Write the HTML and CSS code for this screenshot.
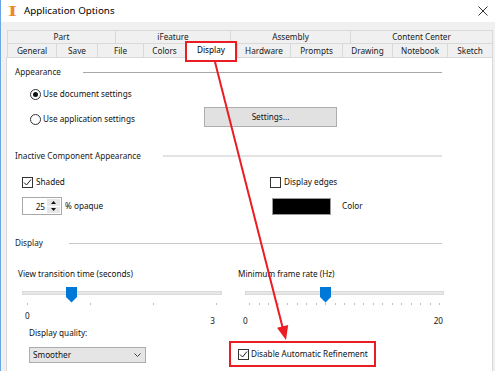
FILE: index.html
```html
<!DOCTYPE html>
<html>
<head>
<meta charset="utf-8">
<title>Application Options</title>
<link rel="stylesheet" href="styles.css">
</head>
<body>
<div class="window">
  <header class="titlebar">
    <span class="app-icon">I</span>
    <span class="title">Application Options</span>
    <svg class="close" width="10" height="10" viewBox="0 0 10 10"><path d="M0.5 0.5L9.5 9.5M9.5 0.5L0.5 9.5" stroke="#333" stroke-width="1" fill="none"/></svg>
  </header>
  <div class="dialog">
    <div class="tabs">
      <div class="tab-row row-top">
        <div class="tab">Part</div>
        <div class="tab">iFeature</div>
        <div class="tab">Assembly</div>
        <div class="tab last">Content Center</div>
      </div>
      <div class="tab-row row-bottom">
        <div class="tab">General</div>
        <div class="tab">Save</div>
        <div class="tab">File</div>
        <div class="tab">Colors</div>
        <div class="tab active">Display</div>
        <div class="tab">Hardware</div>
        <div class="tab">Prompts</div>
        <div class="tab">Drawing</div>
        <div class="tab">Notebook</div>
        <div class="tab last">Sketch</div>
      </div>
    </div>
    <div class="panel">
      <div class="section-head"><span>Appearance</span><i class="rule rule-appearance"></i></div>
      <div class="radio-row first"><span class="radio checked"></span><span>Use document settings</span></div>
      <div class="app-row">
        <div class="radio-row second"><span class="radio"></span><span>Use application settings</span></div>
        <button class="btn">Settings...</button>
      </div>

      <div class="section-head inactive-head"><span>Inactive Component Appearance</span><i class="rule rule-inactive"></i></div>
      <div class="inactive-grid">
        <label class="check"><span class="box"><svg width="9" height="9" viewBox="0 0 9 9"><path d="M1 4.5L3.5 7L8 1.5" stroke="#222" stroke-width="1" fill="none"/></svg></span><span>Shaded</span></label>
        <label class="check"><span class="box"></span><span>Display edges</span></label>
        <div class="spin-row">
          <div class="spin">
            <span class="spin-val">25</span>
            <span class="spin-btns">
              <span class="spin-btn"><svg width="5" height="3" viewBox="0 0 5 3"><path d="M0 3L2.5 0L5 3Z" fill="#111"/></svg></span>
              <span class="spin-btn"><svg width="5" height="3" viewBox="0 0 5 3"><path d="M0 0L2.5 3L5 0Z" fill="#111"/></svg></span>
            </span>
          </div>
          <span>% opaque</span>
        </div>
        <div class="color-row"><span class="swatch"></span><span>Color</span></div>
      </div>

      <div class="section-head display-head"><span>Display</span><i class="rule rule-display"></i></div>
      <div class="display-grid">
        <div class="slider-label">View transition time (seconds)</div>
        <div class="slider-label">Minimum frame rate (Hz)</div>

        <div class="slider slider-left">
          <div class="track"></div>
          <svg class="thumb" style="left:44px" width="11" height="16" viewBox="0 0 11 16"><path d="M0 0H11V10L5.5 15.5L0 10Z" fill="#0078d7"/></svg>
          <div class="ticks"><i></i><i></i><i></i><i></i></div>
        </div>
        <div class="slider slider-right">
          <div class="track"></div>
          <svg class="thumb" style="left:75px" width="11" height="16" viewBox="0 0 11 16"><path d="M0 0H11V10L5.5 15.5L0 10Z" fill="#0078d7"/></svg>
          <div class="ticks"><i></i><i></i><i></i><i></i><i></i><i></i><i></i><i></i><i></i><i></i><i></i><i></i><i></i><i></i><i></i><i></i><i></i><i></i><i></i><i></i><i></i></div>
        </div>

        <div class="nums nums-left"><span class="low">0</span><span>3</span></div>
        <div class="nums nums-right"><span>0</span><span>20</span></div>

        <div class="quality">
          <div class="quality-label">Display quality:</div>
          <div class="select"><span>Smoother</span><svg width="7" height="4" viewBox="0 0 7 4"><path d="M0.5 0.5L3.5 3.5L6.5 0.5" stroke="#444" stroke-width="1" fill="none"/></svg></div>
        </div>
        <div class="refine">
          <label class="check highlight"><span class="box"><svg width="9" height="9" viewBox="0 0 9 9"><path d="M1 4.5L3.5 7L8 1.5" stroke="#222" stroke-width="1" fill="none"/></svg></span><span>Disable Automatic Refinement</span></label>
        </div>
      </div>
    </div>
  </div>
  <svg class="arrow" width="495" height="371" viewBox="0 0 495 371">
    <line x1="215" y1="62" x2="282.5" y2="327" stroke="#ea1c24" stroke-width="2"/>
    <polygon points="286,340 288.2,325 277,327.8" fill="#ea1c24"/>
  </svg>
</div>
</body>
</html>
```

FILE: styles.css
```css
* { box-sizing: border-box; }
html, body { margin: 0; padding: 0; }
body {
  width: 495px;
  height: 371px;
  overflow: hidden;
  font-family: "Noto Sans", "Liberation Sans", sans-serif;
  font-size: 8.2px;
  line-height: 12px;
  color: #111;
  background: #f0f0f0;
}
.window {
  position: relative;
  width: 495px;
  height: 371px;
  border-left: 1px solid #6aa6e4;
  background: #f0f0f0;
  overflow: hidden;
  display: flex;
  flex-direction: column;
}
.titlebar {
  height: 22px;
  flex: none;
  background: #fff;
  display: flex;
  align-items: center;
  padding-left: 6px;
}
.app-icon {
  width: 11px;
  font-family: "Liberation Serif", serif;
  font-weight: bold;
  font-size: 15px;
  line-height: 14px;
  color: #e9892f;
  text-align: center;
  transform: scaleX(1.55);
}
.title {
  margin-left: 6px;
  font-size: 9.8px;
  color: #000;
}
.close { margin-left: auto; margin-right: 7px; }

.dialog {
  flex: 1;
  display: flex;
  flex-direction: column;
  padding: 8px 2px 0 5px;
}
.tabs { margin-left: 1px; }
.tab-row { display: grid; }
.row-top { grid-template-columns: 108px 115px 120px 143px; height: 13px; }
.row-bottom { grid-template-columns: 49px 41px 46px 42px 52px 53px 52px 50px 55px 46px; height: 14px; }
.tab {
  border-top: 1px solid #d9d9d9;
  border-left: 1px solid #d9d9d9;
  text-align: center;
  white-space: nowrap;
  color: #1a1a1a;
  background: #f0f0f0;
}
.tab.last { border-right: 1px solid #d9d9d9; }
.row-top .tab { line-height: 12px; }
.row-bottom .tab { line-height: 13px; }
.tab.active {
  position: relative;
  z-index: 2;
  align-self: start;
  height: 21px;
  margin-top: -2px;
  background: #fff;
  border: 2px solid #ea1c24;
  line-height: 12px;
  padding-top: 1px;
  color: #000;
}

.panel {
  flex: 1;
  background: #fff;
  border: 1px solid #d9d9d9;
  border-bottom: none;
  padding: 8px 0 0 8px;
}
.section-head {
  display: flex;
  align-items: center;
  width: 427px;
  height: 12px;
  color: #1a1a1a;
}
.rule { display: block; margin-left: auto; height: 1px; background: #a9a9a9; }
.rule-appearance { width: 359px; }
.rule-inactive { width: 279px; height: 2px; background: #e3e3e3; }
.rule-display { width: 373px; background: #c8c8c8; }

.radio-row {
  display: flex;
  align-items: center;
  gap: 2px;
  height: 12px;
  margin-left: 15px;
}
.radio-row.first { margin-top: 10px; }
.radio {
  width: 11px;
  height: 11px;
  border: 1px solid #333;
  border-radius: 50%;
  display: flex;
  align-items: center;
  justify-content: center;
  background: #fff;
}
.radio.checked::after {
  content: "";
  width: 5px;
  height: 5px;
  border-radius: 50%;
  background: #111;
}
.app-row {
  display: flex;
  height: 20px;
  margin-top: 7px;
}
.radio-row.second {
  width: 174px;
  align-self: flex-end;
  margin-bottom: 2px;
}
.btn {
  width: 133px;
  height: 20px;
  padding: 0;
  margin: 0;
  background: #e1e1e1;
  border: 1px solid #adadad;
  font: inherit;
  color: #111;
}

.inactive-head { margin-top: 23px; }
.inactive-grid {
  display: grid;
  grid-template-columns: 248px auto;
  grid-template-rows: 12px 18px;
  row-gap: 9px;
  margin-top: 14px;
  margin-left: 7px;
}
.check {
  display: flex;
  align-items: center;
  gap: 2px;
  height: 12px;
}
.box {
  width: 11px;
  height: 11px;
  border: 1px solid #333;
  background: #fff;
  display: flex;
  align-items: center;
  justify-content: center;
  flex: none;
}
.inactive-grid .check { gap: 3px; }
.spin-row { display: flex; align-items: center; gap: 3px; }
.spin {
  width: 40px;
  height: 18px;
  border: 1px solid #a8a8a8;
  display: flex;
  align-items: stretch;
  padding: 1px;
  background: #fff;
}
.spin-val { flex: 1; text-align: right; padding-right: 2px; line-height: 15px; }
.spin-btns { width: 13px; display: flex; flex-direction: column; gap: 1px; }
.spin-btn {
  flex: 1;
  background: #e6e6e6;
  display: flex;
  align-items: center;
  justify-content: center;
}
.color-row { display: flex; align-items: center; gap: 11px; padding-left: 2px; }
.swatch {
  width: 59px;
  height: 17px;
  background: #000;
  border: 1px solid #9a9a9a;
}

.display-head { margin-top: 22px; }
.display-grid {
  display: grid;
  grid-template-columns: 220px 220px;
  margin-top: 19px;
  margin-left: 3px;
}
.slider-label { height: 12px; white-space: nowrap; }
.slider {
  position: relative;
  height: 19px;
  margin-top: 7px;
}
.slider-left { margin-left: 4px; width: 200px; }
.slider-right { margin-left: 7px; width: 199px; }
.track {
  margin-top: 4px;
  height: 4px;
  background: #e7e7e7;
  border: 1px solid #dadada;
}
.thumb { position: absolute; top: 0; }
.ticks {
  margin-top: 8px;
  height: 2px;
  display: flex;
  justify-content: space-between;
  padding: 0 5px;
}
.slider-right .ticks { padding: 0 4px 0 4px; }
.ticks i { display: block; width: 1px; height: 2px; background: #c2c2c2; }

.nums {
  display: flex;
  justify-content: space-between;
  align-items: flex-start;
  height: 17px;
  margin-top: 4px;
}
.nums span { margin-top: 5px; }
.nums .low { margin-top: 0; }
.nums-left { padding: 0 23px 0 7px; }
.nums-right { padding: 0 15px 0 5px; }

.quality { padding-left: 11px; }
.quality-label { height: 12px; }
.select {
  margin-top: 8px;
  width: 117px;
  height: 16px;
  background: #e5e5e5;
  border: 1px solid #acacac;
  display: flex;
  align-items: center;
  justify-content: space-between;
  padding: 0 4px 0 3px;
}
.refine { margin-top: 14px; margin-left: -9px; }
.check.highlight {
  width: 147px;
  height: 26px;
  border: 2px solid #ea1c24;
  padding: 5px 0 5px 7px;
  white-space: nowrap;
}
.arrow {
  position: absolute;
  top: 0;
  left: -1px;
  z-index: 5;
  pointer-events: none;
}
```
